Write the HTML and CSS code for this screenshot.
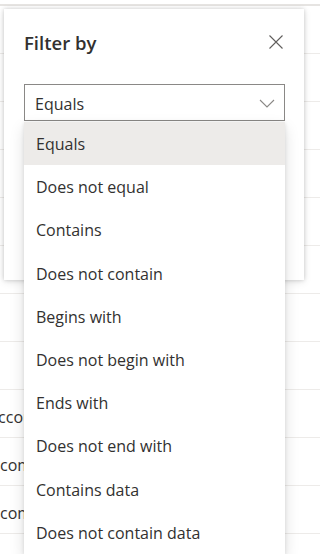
FILE: index.html
```html
<!DOCTYPE html>
<html>
<head>
<meta charset="utf-8">
<link rel="stylesheet" href="styles.css">
</head>
<body>
<div class="grid">
  <div class="grid-head"></div>
  <div class="row"></div>
  <div class="row"></div>
  <div class="row"></div>
  <div class="row"></div>
  <div class="row"></div>
  <div class="row"></div>
  <div class="row"></div>
  <div class="row"></div>
  <div class="row"><span class="cell cell-a">Account</span></div>
  <div class="row"><span class="cell cell-b">company</span></div>
  <div class="row"><span class="cell cell-b">company</span></div>
</div>

<div class="panel">
  <div class="panel-head">
    <div class="panel-title">Filter by</div>
    <svg class="close" width="16" height="16" viewBox="0 0 16 16"><path d="M1.5 1.5 L14.5 14.5 M14.5 1.5 L1.5 14.5" stroke="#605e5c" stroke-width="1.1" fill="none"/></svg>
  </div>
  <div class="select">
    <span class="select-text">Equals</span>
    <svg class="chevron" width="16" height="9" viewBox="0 0 16 9"><path d="M1 1 L8 8 L15 1" stroke="#8a8886" stroke-width="1.1" fill="none"/></svg>
  </div>
</div>

<div class="options">
  <div class="option selected">Equals</div>
  <div class="option">Does not equal</div>
  <div class="option">Contains</div>
  <div class="option">Does not contain</div>
  <div class="option">Begins with</div>
  <div class="option">Does not begin with</div>
  <div class="option">Ends with</div>
  <div class="option">Does not end with</div>
  <div class="option">Contains data</div>
  <div class="option">Does not contain data</div>
</div>
</body>
</html>
```

FILE: styles.css
```css
html, body {
  margin: 0;
  padding: 0;
}
body {
  width: 320px;
  height: 554px;
  overflow: hidden;
  position: relative;
  background: #ffffff;
  font-family: "Open Sans", "Noto Sans", sans-serif;
  color: #323130;
}
.grid {
  display: flex;
  flex-direction: column;
}
.grid-head {
  height: 4px;
  border-bottom: 2px solid #e6e4e2;
}
.row {
  height: 47px;
  border-bottom: 1px solid #edebe9;
  display: flex;
  align-items: center;
  overflow: hidden;
}
.cell {
  font-size: 16px;
  white-space: nowrap;
  color: #323130;
  margin-top: 6px;
}
.cell-a {
  margin-left: -12px;
}
.cell-b {
  margin-left: 0;
}
.panel {
  position: absolute;
  left: 4px;
  top: 9px;
  width: 300px;
  height: 271px;
  box-sizing: border-box;
  padding: 0 19px 0 20px;
  background: #ffffff;
  box-shadow: 0 0 4px rgba(0,0,0,0.18), 0 2px 8px rgba(0,0,0,0.10);
}
.panel-head {
  height: 75px;
  box-sizing: border-box;
  padding-top: 20px;
  display: flex;
  justify-content: space-between;
  align-items: flex-start;
}
.panel-title {
  font-size: 18.5px;
  line-height: 28px;
  font-weight: 600;
  color: #323130;
}
.close {
  margin-top: 5px;
  margin-right: 1px;
}
.select {
  height: 37px;
  box-sizing: border-box;
  border: 1px solid #8a8886;
  display: flex;
  align-items: center;
  justify-content: space-between;
  padding: 0 9px 0 10px;
}
.select-text {
  font-size: 16px;
  color: #323130;
  margin-top: 2px;
}
.chevron {
  margin-top: 1px;
}
.options {
  position: absolute;
  left: 24px;
  top: 122px;
  width: 261px;
  height: 432px;
  background: #ffffff;
  box-shadow: 0 6px 14px rgba(0,0,0,0.13), 0 1px 4px rgba(0,0,0,0.11);
  display: flex;
  flex-direction: column;
}
.option {
  height: 43.2px;
  flex: none;
  display: flex;
  align-items: center;
  padding-left: 12px;
  padding-top: 1px;
  box-sizing: border-box;
  font-size: 16px;
  color: #323130;
  white-space: nowrap;
}
.option.selected {
  background: #edebe9;
}
```
